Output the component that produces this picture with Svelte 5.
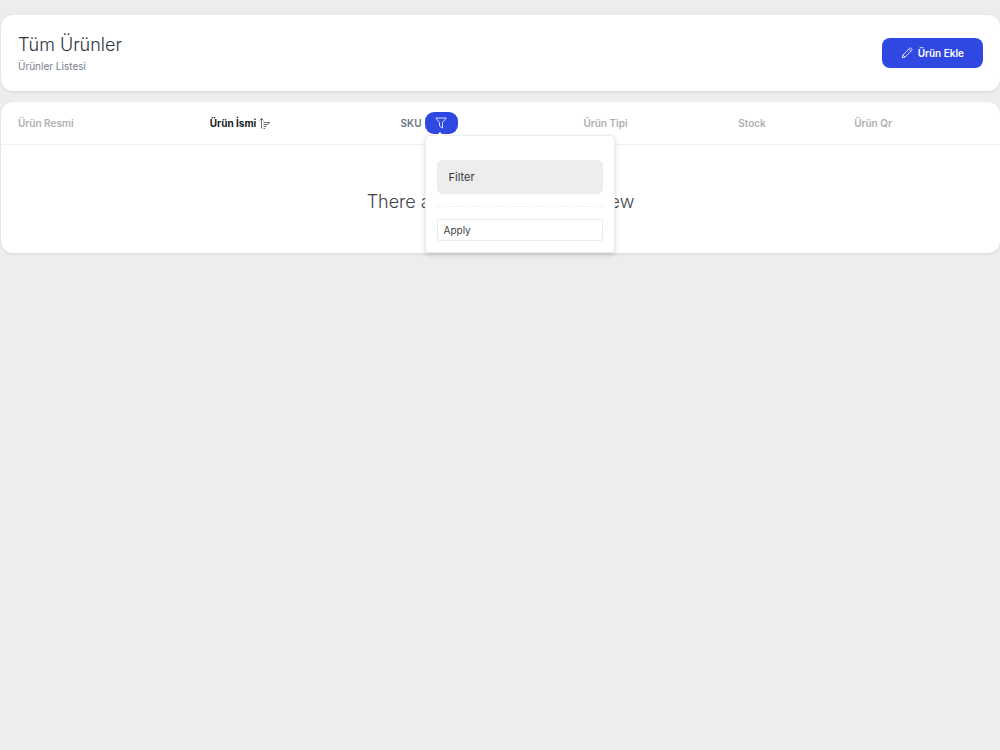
<script>
  let filterOpen = $state(true);
  let filterText = $state('');
</script>

<main>
  <header class="card heading">
    <div>
      <h1>Tüm Ürünler</h1>
      <p>Ürünler Listesi</p>
    </div>
    <button class="add" type="button">
      <svg width="12" height="12" viewBox="0 0 12 12" aria-hidden="true">
        <path d="M1.2 10.8 1.9 8 8.7 1.2Q9.4.6 10.1 1.2L10.8 1.9Q11.4 2.6 10.8 3.3L4 10.1ZM7.8 2.1 9.9 4.2M1.9 8 4 10.1" />
      </svg>
      Ürün Ekle
    </button>
  </header>

  <section class="card">
    <table>
      <colgroup>
        <col style="width: 19.2%" />
        <col style="width: 19.1%" />
        <col style="width: 18.3%" />
        <col style="width: 15.5%" />
        <col style="width: 11.6%" />
        <col />
      </colgroup>
      <thead>
        <tr>
          <th scope="col">Ürün Resmi</th>
          <th scope="col" class="sorted" aria-sort="ascending">
            <span class="label">
              Ürün İsmi
              <svg width="11" height="12" viewBox="0 0 11 12" aria-hidden="true">
                <path d="M2.5 11.5V1.5M.5 3.5 2.5 1.5 4.5 3.5M4.5 5.5H10.5L9 7.5H4.5M4.5 9.5H7.5M4.5 11.5H6" />
              </svg>
            </span>
          </th>
          <th scope="col" class="sku">
            <div class="label">
              SKU
              <div class="dropdown">
                <button
                  class="toggle"
                  type="button"
                  aria-label="SKU"
                  aria-expanded={filterOpen}
                  onclick={() => (filterOpen = !filterOpen)}
                >
                  <svg width="12" height="12" viewBox="0 0 12 12" aria-hidden="true">
                    <path d="M.8 1H11.2L7.5 5.5V11L4.5 9V5.5Z" />
                  </svg>
                </button>
                {#if filterOpen}
                  <div class="menu">
                    <input type="text" aria-label="Filter" placeholder="Filter" bind:value={filterText} />
                    <hr />
                    <button class="apply" type="button">Apply</button>
                  </div>
                {/if}
              </div>
            </div>
          </th>
          <th scope="col">Ürün Tipi</th>
          <th scope="col">Stock</th>
          <th scope="col">Ürün Qr</th>
        </tr>
      </thead>
      <tbody>
        <tr>
          <td colspan="6">There are no records to preview</td>
        </tr>
      </tbody>
    </table>
  </section>
</main>

<style>
  :global(body) {
    margin: 0;
    background: #ebedee;
  }

  main {
    display: flex;
    flex-direction: column;
    gap: 11px;
    padding: 15px 0 15px 1px;
    font-family: Inter, "Liberation Sans", sans-serif;
    font-size: 10px;
  }

  main :is(button, input) {
    box-sizing: border-box;
    font-family: inherit;
    font-size: 10px;
  }

  .card {
    background: #fff;
    border-radius: 12px;
    box-shadow: 0 1px 3px #00000018;
  }

  .heading {
    display: flex;
    align-items: center;
    justify-content: space-between;
    padding: 17px;
  }

  h1 {
    margin: 0;
    color: #2c353d;
    font-size: 18px;
    font-weight: 300;
    line-height: 26px;
  }

  p {
    margin: 0;
    color: #75808a;
    line-height: 16px;
  }

  svg {
    flex: none;
    fill: none;
    stroke: currentColor;
    stroke-width: 0.8;
    stroke-linejoin: round;
  }

  .add {
    display: flex;
    align-items: center;
    justify-content: center;
    gap: 5px;
    height: 30px;
    padding: 0 19px;
    border: 0;
    border-radius: 8px;
    background: #2f48e1;
    color: #fff;
    font-weight: 600;
  }

  table {
    width: 100%;
    table-layout: fixed;
    border-collapse: separate;
    border-spacing: 0;
  }

  th {
    height: 42px;
    padding: 0 0 0 17px;
    border-bottom: 1px solid #eff1f2;
    color: #afafaf;
    font-weight: 600;
    text-align: left;
  }

  .sorted {
    color: #16191c;
    font-weight: 700;
  }

  .sku {
    color: #6b7680;
  }

  .label {
    display: flex;
    align-items: center;
    gap: 3px;
  }

  .sorted svg {
    color: #444;
  }

  .dropdown {
    position: relative;
  }

  .toggle {
    display: flex;
    align-items: center;
    justify-content: center;
    width: 33px;
    height: 22px;
    padding: 0;
    border: 0;
    border-radius: 9px;
    background: #2f48e1;
    color: #fff;
  }

  .menu {
    position: absolute;
    z-index: 1;
    top: 100%;
    left: 0;
    display: flex;
    flex-direction: column;
    gap: 12px;
    box-sizing: border-box;
    width: 190px;
    margin-top: 1px;
    padding: 24px 11px 11px;
    border: 1px solid #eceeef;
    border-radius: 4px;
    background: #fff;
    box-shadow: 0 2px 5px #00000028;
  }

  .menu::before {
    position: absolute;
    top: -4px;
    left: 10px;
    border: 4px solid transparent;
    border-top: 0;
    border-bottom-color: #fff;
    content: "";
  }

  .menu input {
    width: 100%;
    height: 34px;
    padding: 0 12px;
    border: 0;
    border-radius: 6px;
    background: #ededed;
    color: #333;
    font-size: 11px;
  }

  input::placeholder {
    color: #333;
    opacity: 1;
  }

  hr {
    width: 100%;
    margin: 0;
    border: 0;
    border-top: 1px dashed #eff1f2;
  }

  .apply {
    width: 100%;
    height: 22px;
    padding: 0 6px;
    border: 1px solid #e9ebec;
    border-radius: 2px;
    background: #fff;
    color: #444;
    text-align: left;
  }

  td {
    height: 108px;
    padding: 6px 0 0;
    box-sizing: border-box;
    color: #3e4347;
    font-size: 18px;
    font-weight: 300;
    line-height: 26px;
    text-align: center;
  }
</style>
